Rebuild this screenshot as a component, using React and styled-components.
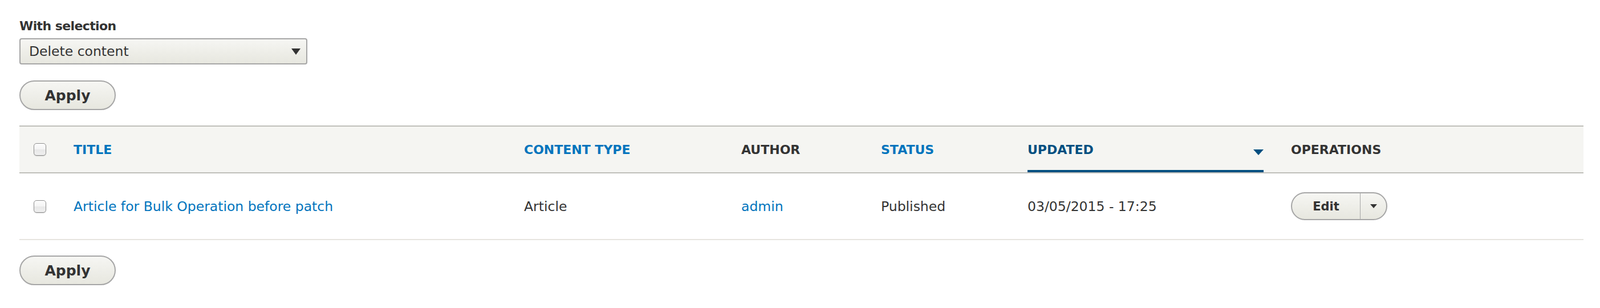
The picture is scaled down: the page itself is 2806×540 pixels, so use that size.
import React from 'react'
import styled, { createGlobalStyle } from 'styled-components'

const GlobalStyle = createGlobalStyle`
  body {
    margin: 0;
    background: #fff;
    font-family: "DejaVu Sans", "Liberation Sans", sans-serif;
    color: #333;
  }
`

const columns = [71, 790, 381, 245, 257, 462, null]

const headers = [
  { label: 'TITLE', link: true },
  { label: 'CONTENT TYPE', link: true },
  { label: 'AUTHOR' },
  { label: 'STATUS', link: true },
  { label: 'UPDATED', link: true, active: true },
  { label: 'OPERATIONS' },
]

const rows = [
  {
    title: 'Article for Bulk Operation before patch',
    type: 'Article',
    author: 'admin',
    status: 'Published',
    updated: '03/05/2015 - 17:25',
  },
]

const Triangle = ({ w, h, color }) => (
  <svg width={w} height={h} viewBox={`0 0 ${w} ${h}`}>
    <path d={`M0 0 H${w} L${w / 2} ${h} Z`} fill={color} />
  </svg>
)

const App = () => {
  return (
    <Page>
      <GlobalStyle />
      <Label htmlFor="action">With selection</Label>
      <SelectWrap>
        <Select id="action" defaultValue="delete">
          <option value="delete">Delete content</option>
          <option value="publish">Publish content</option>
          <option value="unpublish">Unpublish content</option>
        </Select>
        <SelectArrow>
          <Triangle w={16} h={11} color="#333" />
        </SelectArrow>
      </SelectWrap>
      <Button type="button" $mt={28}>Apply</Button>

      <Table>
        <colgroup>
          {columns.map((w, i) => <Col key={i} $w={w} />)}
        </colgroup>
        <thead>
          <tr>
            <Th $check>
              <Check />
            </Th>
            {headers.map(h => (
              <Th key={h.label}>
                <HeadLabel $link={h.link} $active={h.active}>
                  <span>{h.label}</span>
                  {h.active && (
                    <SortIcon>
                      <Triangle w={18} h={10} color="#004f80" />
                    </SortIcon>
                  )}
                </HeadLabel>
              </Th>
            ))}
          </tr>
        </thead>
        <tbody>
          {rows.map(r => (
            <tr key={r.title}>
              <Td $check><Check /></Td>
              <Td><Link href="#">{r.title}</Link></Td>
              <Td>{r.type}</Td>
              <Td><Link href="#">{r.author}</Link></Td>
              <Td>{r.status}</Td>
              <Td>{r.updated}</Td>
              <Td>
                <DropButton>
                  <DropMain href="#">Edit</DropMain>
                  <DropToggle type="button">
                    <Triangle w={12} h={7} color="#333" />
                  </DropToggle>
                </DropButton>
              </Td>
            </tr>
          ))}
        </tbody>
      </Table>

      <Button type="button" $mt={27}>Apply</Button>
    </Page>
  )
}

export default App

const Page = styled.form`
  padding: 31px 29px 40px 34px;
`

const Label = styled.label`
  display: block;
  font-weight: 700;
  font-size: 22px;
  line-height: 30px;
  letter-spacing: -0.6px;
`

const SelectWrap = styled.div`
  position: relative;
  width: 505px;
  height: 46px;
  margin-top: 6px;
`

const Select = styled.select`
  appearance: none;
  width: 100%;
  height: 100%;
  box-sizing: border-box;
  border: 2px solid #a6a6a6;
  border-radius: 4px;
  background: linear-gradient(#f6f6f3, #e7e7df);
  font-family: "DejaVu Sans", sans-serif;
  font-size: 23.5px;
  color: #333;
  padding: 0 40px 0 15px;
  outline: none;
`

const SelectArrow = styled.span`
  position: absolute;
  right: 12px;
  top: 18px;
  display: flex;
  pointer-events: none;
`

const Button = styled.button`
  display: block;
  margin-top: ${p => p.$mt}px;
  width: 169px;
  height: 52px;
  box-sizing: border-box;
  padding: 0;
  border: 2px solid #a6a6a6;
  border-radius: 26px;
  background: linear-gradient(#f6f6f3, #e7e7df);
  font-family: "DejaVu Sans", sans-serif;
  font-weight: 700;
  font-size: 25px;
  color: #333;
`

const Table = styled.table`
  width: 100%;
  margin-top: 27px;
  border-collapse: separate;
  border-spacing: 0;
  table-layout: fixed;
`

const Col = styled.col`
  width: ${p => (p.$w ? `${p.$w}px` : 'auto')};
`

const Th = styled.th`
  padding: ${p => (p.$check ? '0 0 0 25px' : '0 24px')};
  background: #f5f5f2;
  border-top: 2px solid #bfbfba;
  border-bottom: 2px solid #bfbfba;
  text-align: left;
  vertical-align: middle;
`

const HeadLabel = styled.div`
  display: flex;
  align-items: center;
  justify-content: space-between;
  height: 80px;
  box-sizing: border-box;
  padding-top: 4px;
  border-bottom: 4px solid ${p => (p.$active ? '#004f80' : 'transparent')};
  font-size: 22px;
  font-weight: 700;
  color: ${p => (p.$active ? '#004f80' : p.$link ? '#0074bd' : '#333')};
  cursor: ${p => (p.$link ? 'pointer' : 'default')};
`

const SortIcon = styled.span`
  display: flex;
  margin-top: 10px;
`

const Td = styled.td`
  height: 115px;
  padding: ${p => (p.$check ? '0 0 0 25px' : '0 24px')};
  border-bottom: 2px solid #e6e4df;
  vertical-align: middle;
  font-size: 23.5px;
  color: #333;
`

const Check = styled.input.attrs({ type: 'checkbox' })`
  appearance: none;
  display: block;
  margin: 0;
  width: 22px;
  height: 22px;
  box-sizing: border-box;
  border: 1.5px solid #8f8f8f;
  border-radius: 5px;
  background: linear-gradient(#fdfdfd 0%, #f3f3f3 50%, #e8e8e8 52%, #efefef 100%);
  box-shadow: 0 1px 1px rgba(0, 0, 0, 0.15);
`

const Link = styled.a`
  color: #0074bd;
  text-decoration: none;
`

const DropButton = styled.div`
  display: inline-flex;
  height: 49px;
  box-sizing: border-box;
  border: 2px solid #a6a6a6;
  border-radius: 25px;
  background: linear-gradient(#f6f6f3, #e7e7df);
  overflow: hidden;
`

const DropMain = styled.a`
  display: flex;
  align-items: center;
  justify-content: center;
  width: 119px;
  border-right: 1px solid #a6a6a6;
  font-size: 21px;
  font-weight: 700;
  color: #333;
  text-decoration: none;
`

const DropToggle = styled.button`
  display: flex;
  align-items: center;
  justify-content: center;
  width: 45px;
  padding: 0;
  border: 0;
  background: transparent;
`
